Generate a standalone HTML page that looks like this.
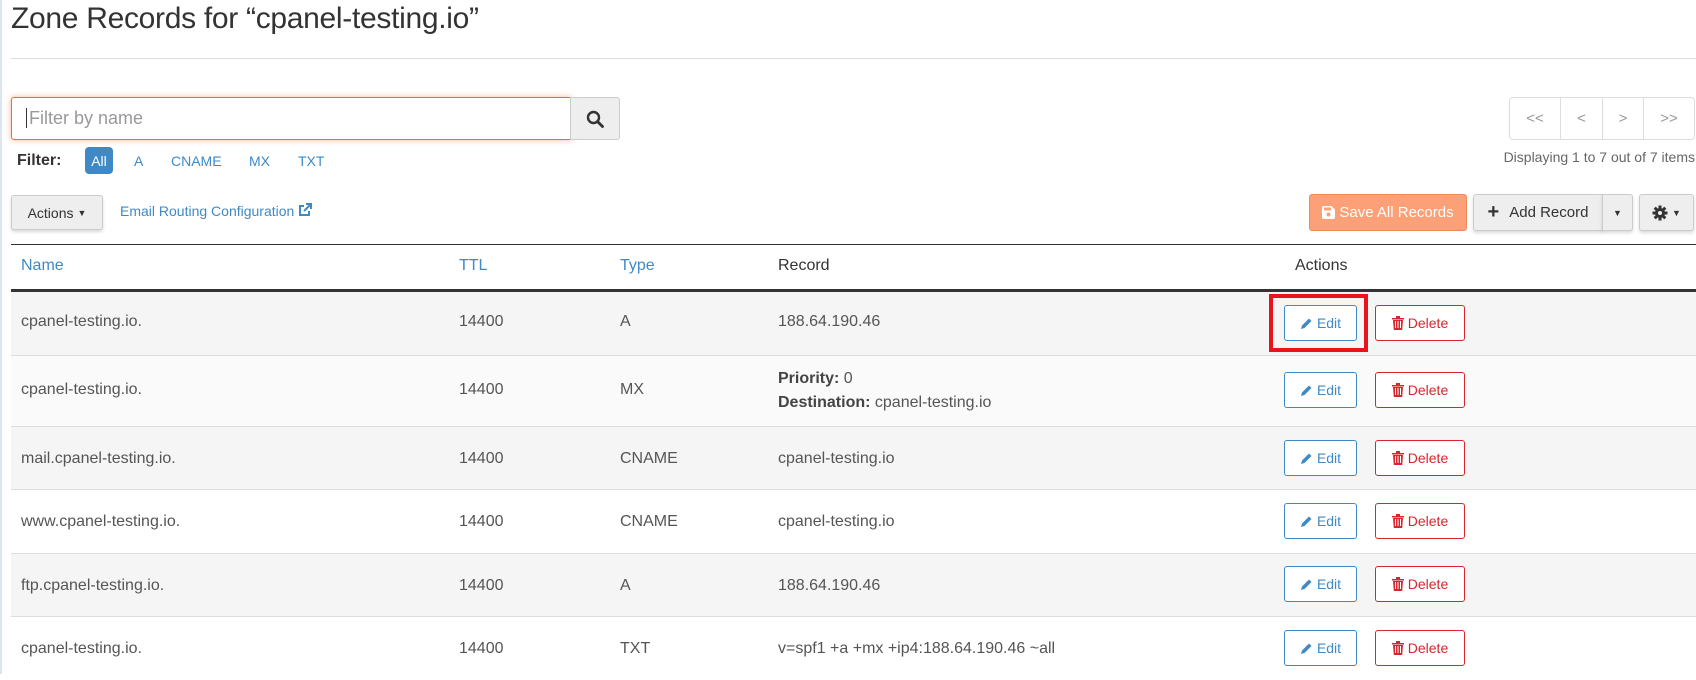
<!DOCTYPE html>
<html><head><meta charset="utf-8"><style>
*{box-sizing:border-box;margin:0;padding:0}
body{width:1696px;height:674px;overflow:hidden;background:#fff;font-family:"Liberation Sans",sans-serif;color:#555;position:relative}
.a{position:absolute}
.lb{left:0;top:0;width:2px;height:674px;background:#dbe6f3}
h1{position:absolute;left:11px;top:2px;font-weight:300;font-size:30px;color:#333;letter-spacing:-0.3px;font-family:"Liberation Sans",sans-serif}
.btn{position:absolute;border:1px solid #ccc;background:#eee;border-radius:3px;box-shadow:0 2px 3px rgba(0,0,0,.15);font-size:14px;color:#333;display:flex;align-items:center;justify-content:center}
.row{position:absolute;left:11px;width:1685px;border-top:1px solid #ddd;font-size:16px}
.row span{position:absolute}
.ed,.dl{position:absolute;height:36px;border-radius:3px;font-size:14px;display:flex;align-items:center;justify-content:center;gap:4px;background:#fff}
.ed{left:1284px;width:73px;border:1px solid #3f8ac6;color:#3f8ac6}
.dl{left:1375px;width:90px;border:1px solid #d9262e;color:#d9262e}
.hd{position:absolute;top:257px;font-size:16px}
</style></head><body>
<div class="a lb"></div>
<h1>Zone Records for “cpanel-testing.io”</h1>
<div class="a" style="left:11px;top:58px;width:1685px;height:1px;background:#ddd"></div>
<div class="a" style="left:11px;top:97px;width:560px;height:43px;border:1px solid #f26b35;border-radius:3px 0 0 3px;box-shadow:0 0 6px rgba(242,107,53,.5);font-size:18px;color:#999;padding:10px 14px"><span style="border-left:1px solid #333;padding-left:2px">Filter by name</span></div>
<div class="a" style="left:570px;top:97px;width:50px;height:43px;border:1px solid #ccc;background:#eee;border-radius:0 3px 3px 0;display:flex;align-items:center;justify-content:center">
<svg width="18" height="18" viewBox="0 0 18 18"><circle cx="7.5" cy="7.5" r="5.5" fill="none" stroke="#333" stroke-width="2.4"/><path d="M11.5 11.5l5 5" stroke="#333" stroke-width="2.8" stroke-linecap="round"/></svg></div>
<div class="a" style="left:17px;top:152px;font-size:16px;font-weight:bold;color:#333">Filter:</div>
<div class="a" style="left:85px;top:147px;width:28px;height:27px;background:#3f8ac6;border-radius:4px;color:#fff;font-size:14px;display:flex;align-items:center;justify-content:center">All</div>
<div class="a" style="left:134px;top:153px;font-size:14px;color:#3f8ac6">A</div>
<div class="a" style="left:171px;top:153px;font-size:14px;color:#3f8ac6">CNAME</div>
<div class="a" style="left:249px;top:153px;font-size:14px;color:#3f8ac6">MX</div>
<div class="a" style="left:298px;top:153px;font-size:14px;color:#3f8ac6">TXT</div>
<div class="btn" style="left:11px;top:195px;width:92px;height:35px">Actions <span style="font-size:9px;margin-left:4px">▼</span></div>
<div class="a" style="left:120px;top:203px;font-size:14px;color:#3f8ac6">Email Routing Configuration <svg width="14" height="14" viewBox="0 0 14 14" style="vertical-align:-1px"><path d="M11 8v4H2V3h4" fill="none" stroke="#3f8ac6" stroke-width="2"/><path d="M8 1h5v5M13 1L6 8" fill="none" stroke="#3f8ac6" stroke-width="2"/></svg></div>
<div class="a" style="left:1509px;top:97px;width:186px;height:43px;border:1px solid #ddd;border-radius:4px;display:flex;font-size:15px;color:#999">
<div style="width:51px;border-right:1px solid #ddd;display:flex;align-items:center;justify-content:center">&lt;&lt;</div>
<div style="width:42px;border-right:1px solid #ddd;display:flex;align-items:center;justify-content:center">&lt;</div>
<div style="width:41px;border-right:1px solid #ddd;display:flex;align-items:center;justify-content:center">&gt;</div>
<div style="flex:1;display:flex;align-items:center;justify-content:center">&gt;&gt;</div></div>
<div class="a" style="right:1px;top:149px;font-size:14px;color:#666">Displaying 1 to 7 out of 7 items</div>
<div class="a" style="left:1309px;top:194px;width:158px;height:37px;background:#fca077;border:1px solid #f08a5d;border-radius:3px;color:#fff;font-size:15px;display:flex;align-items:center;justify-content:center;gap:4px"><svg width="13" height="13" viewBox="0 0 13 13"><path d="M0 1.5a1.5 1.5 0 011.5-1.5h8L13 3.5v8a1.5 1.5 0 01-1.5 1.5h-10A1.5 1.5 0 010 11.5z" fill="#fff"/><rect x="2" y="1.5" width="7" height="3" fill="#fca077"/><circle cx="6.5" cy="8.5" r="2" fill="#fca077"/></svg>Save All Records</div>
<div class="btn" style="left:1473px;top:194px;width:130px;height:37px;border-radius:3px 0 0 3px;font-size:15px"><b style="font-size:20px;margin-right:10px">+</b>Add Record</div>
<div class="btn" style="left:1602px;top:194px;width:31px;height:37px;border-radius:0 3px 3px 0;font-size:9px">▼</div>
<div class="btn" style="left:1639px;top:194px;width:55px;height:37px"><svg width="16" height="16" viewBox="0 0 16 16"><g fill="#333"><circle cx="8" cy="8" r="5"/><rect x="6.5" y="0.5" width="3" height="15"/><rect x="0.5" y="6.5" width="15" height="3"/><rect x="6.5" y="0.5" width="3" height="15" transform="rotate(45 8 8)"/><rect x="6.5" y="0.5" width="3" height="15" transform="rotate(-45 8 8)"/></g><circle cx="8" cy="8" r="2" fill="#eee"/></svg><span style="font-size:9px;margin-left:4px">▼</span></div>
<div class="a" style="left:11px;top:244px;width:1685px;height:1px;background:#333"></div>
<div class="hd" style="left:21px;color:#3f8ac6">Name</div>
<div class="hd" style="left:459px;color:#3f8ac6">TTL</div>
<div class="hd" style="left:620px;color:#3f8ac6">Type</div>
<div class="hd" style="left:778px;color:#333">Record</div>
<div class="hd" style="left:1295px;color:#333">Actions</div>
<div class="a" style="left:11px;top:289px;width:1685px;height:3px;background:#333"></div>

<div class="row" style="top:292px;height:63px;background:#f5f5f5;border-top:none"><span style="left:10px;top:21px">cpanel-testing.io.</span><span style="left:448px;top:21px">14400</span><span style="left:609px;top:21px">A</span><span style="left:767px;top:21px">188.64.190.46</span></div>
<div class="row" style="top:355px;height:71px;background:#fafafa"><span style="left:10px;top:25px">cpanel-testing.io.</span><span style="left:448px;top:25px">14400</span><span style="left:609px;top:25px">MX</span><span style="left:767px;top:14px"><b style="color:#444">Priority:</b> 0</span><span style="left:767px;top:38px"><b style="color:#444">Destination:</b> cpanel-testing.io</span></div>
<div class="row" style="top:426px;height:63px;background:#f5f5f5"><span style="left:10px;top:23px">mail.cpanel-testing.io.</span><span style="left:448px;top:23px">14400</span><span style="left:609px;top:23px">CNAME</span><span style="left:767px;top:23px">cpanel-testing.io</span></div>
<div class="row" style="top:489px;height:64px;background:#fff"><span style="left:10px;top:23px">www.cpanel-testing.io.</span><span style="left:448px;top:23px">14400</span><span style="left:609px;top:23px">CNAME</span><span style="left:767px;top:23px">cpanel-testing.io</span></div>
<div class="row" style="top:553px;height:63px;background:#f5f5f5"><span style="left:10px;top:23px">ftp.cpanel-testing.io.</span><span style="left:448px;top:23px">14400</span><span style="left:609px;top:23px">A</span><span style="left:767px;top:23px">188.64.190.46</span></div>
<div class="row" style="top:616px;height:64px;background:#fff"><span style="left:10px;top:23px">cpanel-testing.io.</span><span style="left:448px;top:23px">14400</span><span style="left:609px;top:23px">TXT</span><span style="left:767px;top:23px">v=spf1 +a +mx +ip4:188.64.190.46 ~all</span></div>

<div class="a" style="left:1269px;top:294px;width:99px;height:58px;border:4px solid #e8141c"></div>
<div class="ed" style="top:305px"><svg width="13" height="13" viewBox="0 0 13 13"><path d="M1 12l1-3.5L9 1.5l2.5 2.5-7 7z" fill="#3f8ac6"/></svg>Edit</div>
<div class="dl" style="top:305px"><svg width="12" height="14" viewBox="0 0 12 14"><path d="M0 2h12v1.5H0zM4 0h4v2H4zM1 4h10l-.8 10H1.8z" fill="#d9262e"/><path d="M3.5 5v7M6 5v7M8.5 5v7" stroke="#fff"/></svg>Delete</div>
<div class="ed" style="top:372px"><svg width="13" height="13" viewBox="0 0 13 13"><path d="M1 12l1-3.5L9 1.5l2.5 2.5-7 7z" fill="#3f8ac6"/></svg>Edit</div>
<div class="dl" style="top:372px"><svg width="12" height="14" viewBox="0 0 12 14"><path d="M0 2h12v1.5H0zM4 0h4v2H4zM1 4h10l-.8 10H1.8z" fill="#d9262e"/><path d="M3.5 5v7M6 5v7M8.5 5v7" stroke="#fff"/></svg>Delete</div>
<div class="ed" style="top:440px"><svg width="13" height="13" viewBox="0 0 13 13"><path d="M1 12l1-3.5L9 1.5l2.5 2.5-7 7z" fill="#3f8ac6"/></svg>Edit</div>
<div class="dl" style="top:440px"><svg width="12" height="14" viewBox="0 0 12 14"><path d="M0 2h12v1.5H0zM4 0h4v2H4zM1 4h10l-.8 10H1.8z" fill="#d9262e"/><path d="M3.5 5v7M6 5v7M8.5 5v7" stroke="#fff"/></svg>Delete</div>
<div class="ed" style="top:503px"><svg width="13" height="13" viewBox="0 0 13 13"><path d="M1 12l1-3.5L9 1.5l2.5 2.5-7 7z" fill="#3f8ac6"/></svg>Edit</div>
<div class="dl" style="top:503px"><svg width="12" height="14" viewBox="0 0 12 14"><path d="M0 2h12v1.5H0zM4 0h4v2H4zM1 4h10l-.8 10H1.8z" fill="#d9262e"/><path d="M3.5 5v7M6 5v7M8.5 5v7" stroke="#fff"/></svg>Delete</div>
<div class="ed" style="top:566px"><svg width="13" height="13" viewBox="0 0 13 13"><path d="M1 12l1-3.5L9 1.5l2.5 2.5-7 7z" fill="#3f8ac6"/></svg>Edit</div>
<div class="dl" style="top:566px"><svg width="12" height="14" viewBox="0 0 12 14"><path d="M0 2h12v1.5H0zM4 0h4v2H4zM1 4h10l-.8 10H1.8z" fill="#d9262e"/><path d="M3.5 5v7M6 5v7M8.5 5v7" stroke="#fff"/></svg>Delete</div>
<div class="ed" style="top:630px"><svg width="13" height="13" viewBox="0 0 13 13"><path d="M1 12l1-3.5L9 1.5l2.5 2.5-7 7z" fill="#3f8ac6"/></svg>Edit</div>
<div class="dl" style="top:630px"><svg width="12" height="14" viewBox="0 0 12 14"><path d="M0 2h12v1.5H0zM4 0h4v2H4zM1 4h10l-.8 10H1.8z" fill="#d9262e"/><path d="M3.5 5v7M6 5v7M8.5 5v7" stroke="#fff"/></svg>Delete</div>
</body></html>
